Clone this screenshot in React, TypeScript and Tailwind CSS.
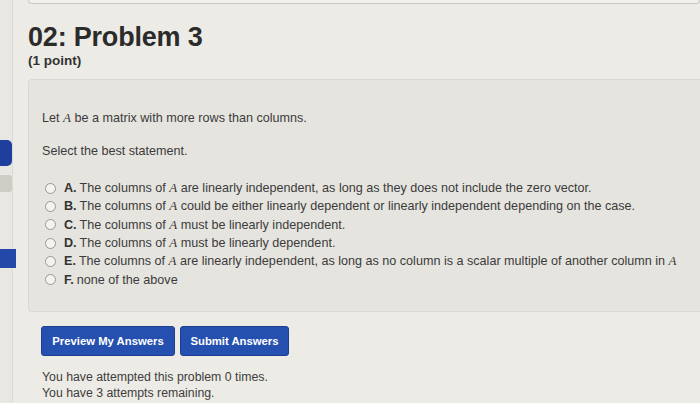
import React from "react";

const A = () => (
  <span
    className="italic leading-none text-[13px] text-[#3a3a3a]"
    style={{ fontFamily: '"Liberation Serif", "DejaVu Serif", serif' }}
  >
    A
  </span>
);

const options: { k: string; t: React.ReactNode }[] = [
  { k: "A.", t: <>The columns of <A /> are linearly independent, as long as they does not include the zero vector.</> },
  { k: "B.", t: <>The columns of <A /> could be either linearly dependent or linearly independent depending on the case.</> },
  { k: "C.", t: <>The columns of <A /> must be linearly independent.</> },
  { k: "D.", t: <>The columns of <A /> must be linearly dependent.</> },
  { k: "E.", t: <>The columns of <A /> are linearly independent, as long as no column is a scalar multiple of another column in <A /></> },
  { k: "F.", t: <>none of the above</> },
];

export default function App() {
  return (
    <div
      className="w-[700px] h-[403px] overflow-hidden flex bg-[#edebe6] text-[#3b3b3b]"
      style={{ fontFamily: '"Liberation Sans", Arial, sans-serif' }}
    >
      {/* sidebar */}
      <div className="w-[13px] shrink-0 bg-[#e9e7e2] border-r border-[#dcdad4] flex flex-col">
        <div className="h-[140px]" />
        <div className="h-[26px] w-[12px] bg-[#1f3f9e] rounded-r-[5px]" />
        <div className="h-[9px]" />
        <div className="h-[17px] w-[12px] bg-[#cfccc5] rounded-r-[3px]" />
        <div className="h-[57px]" />
        <div className="h-[19px] w-[16px] bg-[#2448a8] relative z-10" />
      </div>

      <div className="flex-1 flex flex-col pl-[15px]">
        {/* top box edge */}
        <div className="h-[4px] border-x border-b border-[#c9c7c2] rounded-b-[4px] bg-[#f2f1ee]" />

        <h1 className="mt-[18px] text-[27px] leading-[30px] font-bold text-[#2b2b2b] tracking-[-0.2px]">
          02: Problem 3
        </h1>
        <div className="mt-[1px] text-[13.5px] leading-[16px] font-bold text-[#333]">(1 point)</div>

        <div className="mt-[10px] h-[233px] shrink-0 bg-[#e6e4df] border-t border-l border-b border-[#dad8d2] rounded-l-[4px] pl-[13px] pt-[30px]">
          <div className="text-[12.6px] leading-[16px]">
            Let <A /> be a matrix with more rows than columns.
          </div>
          <div className="mt-[17px] text-[12.6px] leading-[16px]">Select the best statement.</div>

          <div className="mt-[20px] flex flex-col">
            {options.map((o) => (
              <div key={o.k} className="flex items-center h-[18.3px] pl-[3px] text-[12.6px] leading-[18px] whitespace-nowrap">
                <span className="w-[11px] h-[11px] rounded-full border border-[#9a9893] bg-[#f4f3f0] mr-[8px] shrink-0" />
                <span className="font-bold text-[#333] mr-[3px]">{o.k}</span>
                <span className="leading-[18px]">{o.t}</span>
              </div>
            ))}
          </div>
        </div>

        <div className="mt-[14px] ml-[13px] flex gap-[5px]">
          <button className="h-[30px] w-[134px] rounded-[3px] bg-[#2550b0] border border-[#1e3f91] text-white text-[11.3px] font-bold">
            Preview My Answers
          </button>
          <button className="h-[30px] w-[109px] rounded-[3px] bg-[#2550b0] border border-[#1e3f91] text-white text-[11.3px] font-bold">
            Submit Answers
          </button>
        </div>

        <div className="mt-[13px] ml-[14px] text-[12.3px] leading-[16px] text-[#3d3d3d]">
          <div>You have attempted this problem 0 times.</div>
          <div>You have 3 attempts remaining.</div>
        </div>
      </div>
    </div>
  );
}
